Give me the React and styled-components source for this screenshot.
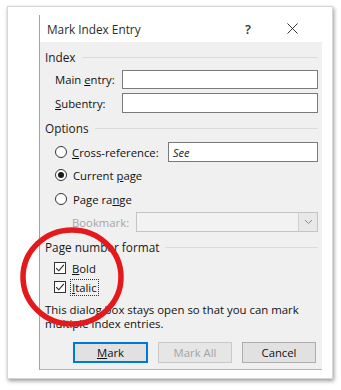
import React from "react";
import styled, { createGlobalStyle } from "styled-components";

const GlobalStyle = createGlobalStyle`
  html, body {
    margin: 0;
    padding: 0;
    background: #ffffff;
  }
  body {
    font-family: "Open Sans", "Noto Sans", "Liberation Sans", sans-serif;
  }
`;

const Page = styled.div`
  width: 341px;
  height: 390px;
  padding: 6px 0 0 7px;
  box-sizing: border-box;
`;

const Card = styled.div`
  position: relative;
  width: 326px;
  height: 373px;
  box-sizing: border-box;
  background: #ffffff;
  border: 1px solid #d6d6d6;
  box-shadow: 1px 2px 4px rgba(0, 0, 0, 0.4);
  padding: 8px 0 0 31px;
`;

const Dialog = styled.div`
  width: 283px;
  height: 355px;
  box-sizing: border-box;
  border-left: 1px solid #a3a3a3;
  border-bottom: 1px solid #b5b5b5;
  display: flex;
  flex-direction: column;
`;

const TitleBar = styled.div`
  height: 27px;
  flex: none;
  display: flex;
  align-items: center;
  padding-left: 7px;
  background: #ffffff;
  color: #2b2b2b;
  font-size: 11.8px;
`;

const TitleText = styled.span`
  flex: 1;
`;

const TitleButton = styled.span`
  width: ${({ w }) => w}px;
  display: flex;
  justify-content: center;
  color: #333;
  font-size: 13px;
  font-weight: 600;
`;

const Body = styled.div`
  flex: 1;
  background: #f0f0f0;
  padding: 0 4px 0 5px;
  display: flex;
  flex-direction: column;
  font-size: 11.3px;
  color: #111;
`;

const SectionHeader = styled.div`
  display: flex;
  align-items: center;
  height: 14px;
  margin-top: ${({ mt }) => mt}px;
  font-size: 11.8px;
  color: #1a1a1a;

  &::after {
    content: "";
    flex: 1;
    height: 1px;
    margin-left: 6px;
    background: #dcdcdc;
  }
`;

const Row = styled.div`
  display: flex;
  align-items: center;
  height: ${({ h }) => h}px;
  margin-top: ${({ mt }) => mt}px;
  padding-left: ${({ indent }) => indent}px;
`;

const FieldLabel = styled.span`
  width: ${({ w }) => w}px;
  flex: none;
  white-space: nowrap;
  color: ${({ disabled }) => (disabled ? "#a6a6a6" : "#111")};
`;

const TextBox = styled.div`
  flex: 1;
  height: 100%;
  box-sizing: border-box;
  background: #ffffff;
  border: 1px solid #7a7a7a;
  display: flex;
  align-items: center;
  padding-left: 4px;
  font-style: italic;
  font-size: 11px;
  color: #222;
`;

const Combo = styled.div`
  flex: 1;
  height: 100%;
  box-sizing: border-box;
  background: #f2f2f2;
  border: 1px solid #c4c4c4;
  display: flex;
  justify-content: flex-end;
`;

const ComboButton = styled.div`
  width: 18px;
  border-left: 1px solid #cfcfcf;
  background: #e8e8e8;
  display: flex;
  align-items: center;
  justify-content: center;
`;

const Radio = styled.span`
  width: 12px;
  height: 12px;
  flex: none;
  box-sizing: border-box;
  border-radius: 50%;
  border: 1px solid #333;
  background: #fff;
  margin-right: 5px;
  display: flex;
  align-items: center;
  justify-content: center;

  &::after {
    content: "";
    width: 6px;
    height: 6px;
    border-radius: 50%;
    background: ${({ checked }) => (checked ? "#1a1a1a" : "transparent")};
  }
`;

const Check = styled.span`
  width: 12px;
  height: 12px;
  flex: none;
  box-sizing: border-box;
  border: 1px solid #333;
  background: #fff;
  margin-right: 5px;
  display: flex;
  align-items: center;
  justify-content: center;
`;

const OptionText = styled.span`
  white-space: nowrap;
  padding: 0 1px;
  outline: ${({ focused }) => (focused ? "1px dotted #333" : "none")};
  outline-offset: 0;
`;

const Note = styled.p`
  margin: 8px 0 0 0;
  font-size: 11.4px;
  line-height: 13.5px;
  color: #111;
`;

const ButtonRow = styled.div`
  display: flex;
  gap: 10px;
  margin-top: 12px;
  padding-left: 28px;
`;

const Button = styled.div`
  width: ${({ w }) => w}px;
  height: 21px;
  box-sizing: border-box;
  display: flex;
  align-items: center;
  justify-content: center;
  font-size: 11.3px;
  background: ${({ disabled }) => (disabled ? "#e6e6e6" : "#e1e1e1")};
  color: ${({ disabled }) => (disabled ? "#a3a3a3" : "#111")};
  border: 1px solid
    ${({ primary, disabled }) =>
      primary ? "#0078d7" : disabled ? "#c8c8c8" : "#adadad"};
  box-shadow: ${({ primary }) => (primary ? "inset 0 0 0 1px #0078d7" : "none")};
`;

const Highlight = styled.svg`
  position: absolute;
  left: 11px;
  top: 220px;
  pointer-events: none;
`;

const CheckMark = () => (
  <svg width="10" height="10" viewBox="0 0 10 10">
    <path d="M1.2 5.2 L3.8 7.8 L8.8 1.8" fill="none" stroke="#222" strokeWidth="1.1" />
  </svg>
);

export default function App() {
  return (
    <Page>
      <GlobalStyle />
      <Card>
        <Dialog>
          <TitleBar>
            <TitleText>Mark Index Entry</TitleText>
            <TitleButton w={28}>?</TitleButton>
            <TitleButton w={60}>
              <svg width="11" height="11" viewBox="0 0 11 11">
                <path d="M0.5 0.5 L10.5 10.5 M10.5 0.5 L0.5 10.5" stroke="#333" strokeWidth="1" />
              </svg>
            </TitleButton>
          </TitleBar>
          <Body>
            <SectionHeader mt={8}>Index</SectionHeader>
            <Row h={19} mt={6} indent={10}>
              <FieldLabel w={67}>
                Main <u>e</u>ntry:
              </FieldLabel>
              <TextBox />
            </Row>
            <Row h={20} mt={4} indent={10}>
              <FieldLabel w={67}>
                <u>S</u>ubentry:
              </FieldLabel>
              <TextBox />
            </Row>

            <SectionHeader mt={8}>Options</SectionHeader>
            <Row h={20} mt={7} indent={10}>
              <Radio />
              <FieldLabel w={96}>
                <u>C</u>ross-reference:
              </FieldLabel>
              <TextBox>See</TextBox>
            </Row>
            <Row h={18} mt={4} indent={10}>
              <Radio checked />
              <OptionText>
                Current <u>p</u>age
              </OptionText>
            </Row>
            <Row h={18} mt={6} indent={10}>
              <Radio />
              <OptionText>
                Page ra<u>n</u>ge
              </OptionText>
            </Row>
            <Row h={20} mt={4} indent={27}>
              <FieldLabel w={64} disabled>
                <u>B</u>ookmark:
              </FieldLabel>
              <Combo>
                <ComboButton>
                  <svg width="9" height="6" viewBox="0 0 9 6">
                    <path d="M1 1 L4.5 4.5 L8 1" fill="none" stroke="#888" strokeWidth="1" />
                  </svg>
                </ComboButton>
              </Combo>
            </Row>

            <SectionHeader mt={8}>Page number format</SectionHeader>
            <Row h={16} mt={6} indent={9}>
              <Check>
                <CheckMark />
              </Check>
              <OptionText>
                <u>B</u>old
              </OptionText>
            </Row>
            <Row h={16} mt={3} indent={9}>
              <Check>
                <CheckMark />
              </Check>
              <OptionText focused>
                <u>I</u>talic
              </OptionText>
            </Row>

            <Note>
              This dialog box stays open so that you can mark
              <br />
              multiple index entries.
            </Note>

            <ButtonRow>
              <Button w={75} primary>
                <span>
                  <u>M</u>ark
                </span>
              </Button>
              <Button w={74} disabled>
                Mark All
              </Button>
              <Button w={74}>Cancel</Button>
            </ButtonRow>
          </Body>
        </Dialog>
        <Highlight width="106" height="102" viewBox="0 0 106 102">
          <ellipse cx="53" cy="50" rx="49" ry="47" fill="none" stroke="#e3191b" strokeWidth="5.5" />
        </Highlight>
      </Card>
    </Page>
  );
}
